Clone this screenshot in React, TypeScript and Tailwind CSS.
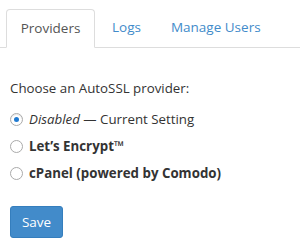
import React from "react";

export default function App() {
  return (
    <div className="w-[300px] h-[252px] bg-white text-[#333] text-[13.3px]" style={{ fontFamily: '"Open Sans", sans-serif' }}>
      <div className="pt-[8px] pl-[6px] flex items-end border-b border-[#ddd]">
        <div className="h-[39px] w-[89px] -mb-px bg-white border border-[#ddd] border-b-white rounded-t-[4px] flex items-center justify-center text-[#555] text-[13.5px]">
          Providers
        </div>
        <div className="h-[39px] pl-[17px] pr-[16px] flex items-center text-[#428bca] text-[13.5px]">Logs</div>
        <div className="h-[39px] pl-[14px] flex items-center text-[#428bca] text-[13.5px]">Manage Users</div>
      </div>
      <div className="px-[10px] pt-[30px]">
        <div className="leading-[20px]">Choose an AutoSSL provider:</div>
        <div className="mt-[11px] flex flex-col gap-[7px]">
          <label className="flex items-center gap-[6px] leading-[20px]">
            <span className="w-[13px] h-[13px] rounded-full border border-[#aaa] bg-white flex items-center justify-center shadow-[inset_0_1px_1px_rgba(0,0,0,0.1)]">
              <span className="w-[5px] h-[5px] rounded-full bg-[#1f7ad1]" />
            </span>
            <span><em>Disabled</em> — Current Setting</span>
          </label>
          <label className="flex items-center gap-[6px] leading-[20px] font-bold">
            <span className="w-[13px] h-[13px] rounded-full border border-[#aaa] bg-white" />
            <span>Let’s Encrypt™</span>
          </label>
          <label className="flex items-center gap-[6px] leading-[20px] font-bold">
            <span className="w-[13px] h-[13px] rounded-full border border-[#aaa] bg-white" />
            <span>cPanel (powered by Comodo)</span>
          </label>
        </div>
        <button className="mt-[23px] h-[32px] w-[53px] rounded-[3px] bg-[#428bca] text-white border border-[#357ebd] text-[13.5px]">Save</button>
      </div>
    </div>
  );
}
